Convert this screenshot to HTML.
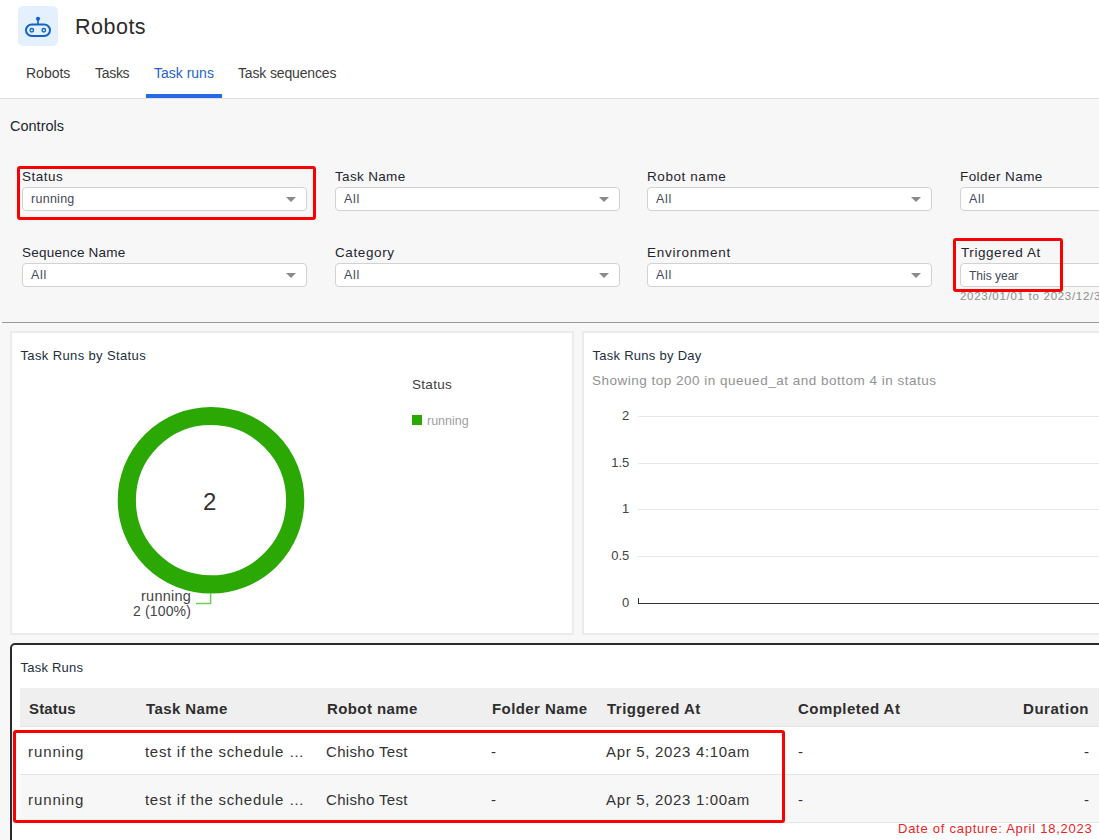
<!DOCTYPE html>
<html lang="en">
<head>
<meta charset="utf-8">
<title>Robots</title>
<style>
*{box-sizing:border-box;margin:0;padding:0}
html,body{width:1099px;height:840px;overflow:hidden;background:#f7f7f7;font-family:"Liberation Sans",sans-serif;color:#232f3e}
body{position:relative}
.abs{position:absolute;white-space:nowrap;line-height:1}
#hdr{position:absolute;left:0;top:0;width:1099px;height:99px;background:#fff;border-bottom:1px solid #e0e0e0}
#iconbox{position:absolute;left:18px;top:6px;width:40px;height:40px;border-radius:5px;background:#e5f0fe}
#title{left:75px;top:17px;font-size:21.5px;letter-spacing:.5px;color:#2b2b2b}
.tab{font-size:14px;color:#3d3d3d;top:66px}
.tab.act{color:#2563c9}
#tabline{position:absolute;left:146px;top:94px;width:76px;height:4px;background:#2767e8}
.lbl{font-size:13.5px;color:#1f2630}
.sel{position:absolute;width:285px;height:24px;border:1px solid #d2d2d2;border-radius:4px;background:#fff}
.sel span{position:absolute;left:8px;top:4.5px;font-size:12.5px;letter-spacing:.7px;line-height:1;color:#444a5a;white-space:nowrap}
.sel i{position:absolute;right:10px;top:9px;width:0;height:0;border-left:5px solid transparent;border-right:5px solid transparent;border-top:5px solid #8a8a8a}
.red{position:absolute;border:3px solid #fa0000;border-radius:3px}
.card{position:absolute;background:#fff;border:2px solid #ebebeb}
#sep{position:absolute;left:2px;top:322px;width:1097px;height:1px;background:#999}
.ct{font-size:13px;color:#232f3e;letter-spacing:.2px}
.ax{font-size:13px;color:#444;text-align:right;width:40px;margin-left:-.7px;margin-top:-1px}
.gl{position:absolute;left:638px;width:461px;height:1px;background:#e6e6e6}
#tbl{position:absolute;left:10px;top:643px;width:1110px;height:220px;background:#fff;border:2px solid #2b2b2b;border-radius:5px}
#thead{position:absolute;left:20px;top:688px;width:1079px;height:39px;background:#efefef;border-bottom:1px solid #e4e4e4}
.th{font-size:15px;font-weight:bold;color:#2e2e2e;top:701px}
#r1{position:absolute;left:20px;top:727px;width:1079px;height:48px;background:#fff;border-bottom:1px solid #e4e4e4}
#r2{position:absolute;left:20px;top:775px;width:1079px;height:48px;background:#f7f7f7;border-bottom:1px solid #e4e4e4}
.td{font-size:15px;color:#333}
.ra{top:744px}.rb{top:792px}
</style>
</head>
<body>
<div id="hdr">
  <div id="iconbox">
    <svg width="40" height="40" viewBox="0 0 40 40" style="position:absolute;left:0;top:0">
      <rect x="8" y="18.5" width="24" height="11.5" rx="5.75" ry="5.75" fill="none" stroke="#1264c8" stroke-width="2"/>
      <circle cx="13.8" cy="24.3" r="1.75" fill="none" stroke="#1264c8" stroke-width="1.4"/>
      <circle cx="25.8" cy="24.3" r="1.75" fill="none" stroke="#1264c8" stroke-width="1.4"/>
      <line x1="20" y1="13" x2="20" y2="18" stroke="#1264c8" stroke-width="1.6"/>
      <circle cx="20" cy="12.8" r="2.1" fill="#1264c8"/>
    </svg>
  </div>
  <div id="title" class="abs">Robots</div>
  <div class="abs tab" style="left:26px">Robots</div>
  <div class="abs tab" style="left:95px;letter-spacing:-.3px">Tasks</div>
  <div class="abs tab act" style="left:154px">Task runs</div>
  <div class="abs tab" style="left:238px;letter-spacing:-.15px">Task sequences</div>
  <div id="tabline"></div>
</div>

<div class="abs lbl" style="left:10px;top:119px;font-size:14.5px">Controls</div>

<div class="abs lbl" style="left:22px;top:170px;letter-spacing:.5px">Status</div>
<div class="sel" style="left:22px;top:187px"><span style="letter-spacing:.27px">running</span><i></i></div>
<div class="abs lbl" style="left:335px;top:170px;letter-spacing:.33px">Task Name</div>
<div class="sel" style="left:335px;top:187px"><span>All</span><i></i></div>
<div class="abs lbl" style="left:647px;top:170px;letter-spacing:.58px">Robot name</div>
<div class="sel" style="left:647px;top:187px"><span>All</span><i></i></div>
<div class="abs lbl" style="left:960px;top:170px;letter-spacing:.43px">Folder Name</div>
<div class="sel" style="left:960px;top:187px"><span>All</span><i></i></div>

<div class="abs lbl" style="left:22px;top:246px;letter-spacing:.23px">Sequence Name</div>
<div class="sel" style="left:22px;top:263px"><span>All</span><i></i></div>
<div class="abs lbl" style="left:335px;top:246px;letter-spacing:.6px">Category</div>
<div class="sel" style="left:335px;top:263px"><span>All</span><i></i></div>
<div class="abs lbl" style="left:647px;top:246px;letter-spacing:.74px">Environment</div>
<div class="sel" style="left:647px;top:263px"><span>All</span><i></i></div>
<div class="abs lbl" style="left:961px;top:246px;letter-spacing:.57px">Triggered At</div>
<div class="sel" style="left:960px;top:263px"><span style="font-size:12px;top:5.5px;letter-spacing:0">This year</span></div>
<div class="abs" style="left:960px;top:292px;font-size:10px;letter-spacing:.62px;transform:scaleX(1.15);transform-origin:0 0;color:#8e8e8e">2023/01/01 to 2023/12/31</div>

<div class="red" style="left:17px;top:166px;width:299px;height:54px"></div>
<div class="red" style="left:953px;top:238px;width:110px;height:54px"></div>

<div id="sep"></div>

<div class="card" style="left:10px;top:331px;width:564px;height:304px"></div>
<div class="abs ct" style="left:20.5px;top:349px;letter-spacing:.37px">Task Runs by Status</div>
<svg class="abs" style="left:100px;top:390px" width="230" height="240" viewBox="100 390 230 240">
  <circle cx="211" cy="500.2" r="84.2" fill="none" stroke="#2ca805" stroke-width="18.2"/>
  <path d="M210.6 593 V603.6 H196" fill="none" stroke="#6fcf58" stroke-width="1.5"/>
</svg>
<div class="abs" style="left:203px;top:489.5px;font-size:24px;color:#333">2</div>
<div class="abs" style="left:141px;top:588.5px;font-size:14.5px;letter-spacing:.25px;color:#444">running</div>
<div class="abs" style="left:133px;top:604.3px;font-size:14px;color:#444;letter-spacing:.15px">2 (100%)</div>
<div class="abs" style="left:412px;top:378px;font-size:13.5px;letter-spacing:.3px;color:#404040">Status</div>
<div style="position:absolute;left:412px;top:415px;width:10px;height:10px;background:#2ca805"></div>
<div class="abs" style="left:427px;top:414.6px;font-size:12.5px;color:#a0a0a0">running</div>

<div class="card" style="left:582px;top:331px;width:540px;height:304px"></div>
<div class="abs ct" style="left:592.5px;top:349px;letter-spacing:.27px">Task Runs by Day</div>
<div class="abs" style="left:592px;top:374px;font-size:13.5px;letter-spacing:.5px;color:#929292" id="showing">Showing top 200 in queued_at and bottom 4 in status</div>
<div class="gl" style="top:416px"></div>
<div class="gl" style="top:463px"></div>
<div class="gl" style="top:509px"></div>
<div class="gl" style="top:556px"></div>
<div class="gl" style="top:603px;background:#333"></div>
<div style="position:absolute;left:638px;top:598px;width:1px;height:6px;background:#333"></div>
<div class="abs ax" style="left:590px;top:410px">2</div>
<div class="abs ax" style="left:590px;top:457px">1.5</div>
<div class="abs ax" style="left:590px;top:503px">1</div>
<div class="abs ax" style="left:590px;top:550px">0.5</div>
<div class="abs ax" style="left:590px;top:597px">0</div>

<div id="tbl"></div>
<div class="abs ct" style="left:20.5px;top:661px;letter-spacing:.22px">Task Runs</div>
<div id="thead"></div>
<div id="r1"></div>
<div id="r2"></div>
<div class="abs th" style="left:29px;letter-spacing:0.15px">Status</div>
<div class="abs th" style="left:146px;letter-spacing:0.42px">Task Name</div>
<div class="abs th" style="left:327px;letter-spacing:0.4px">Robot name</div>
<div class="abs th" style="left:492px;letter-spacing:0.42px">Folder Name</div>
<div class="abs th" style="left:607px;letter-spacing:0.5px">Triggered At</div>
<div class="abs th" style="left:798px;letter-spacing:0.45px">Completed At</div>
<div class="abs th" style="left:1023px;letter-spacing:0.55px">Duration</div>

<div class="abs td ra" style="left:28px;letter-spacing:0.9px">running</div>
<div class="abs td ra" style="left:145px;letter-spacing:.7px">test if the schedule …</div>
<div class="abs td ra" style="left:326px;letter-spacing:0.33px">Chisho Test</div>
<div class="abs td ra" style="left:491px">-</div>
<div class="abs td ra" style="left:606px;letter-spacing:0.68px">Apr 5, 2023 4:10am</div>
<div class="abs td ra" style="left:798px">-</div>
<div class="abs td ra" style="left:1084px">-</div>

<div class="abs td rb" style="left:28px;letter-spacing:0.9px">running</div>
<div class="abs td rb" style="left:145px;letter-spacing:.7px">test if the schedule …</div>
<div class="abs td rb" style="left:326px;letter-spacing:0.33px">Chisho Test</div>
<div class="abs td rb" style="left:491px">-</div>
<div class="abs td rb" style="left:606px;letter-spacing:0.68px">Apr 5, 2023 1:00am</div>
<div class="abs td rb" style="left:798px">-</div>
<div class="abs td rb" style="left:1084px">-</div>

<div class="red" style="left:13px;top:730px;width:772px;height:93px"></div>
<div class="abs" style="left:898px;top:822px;font-size:13px;letter-spacing:.75px;color:#ee1c25" id="cap">Date of capture: April 18,2023</div>
</body>
</html>
